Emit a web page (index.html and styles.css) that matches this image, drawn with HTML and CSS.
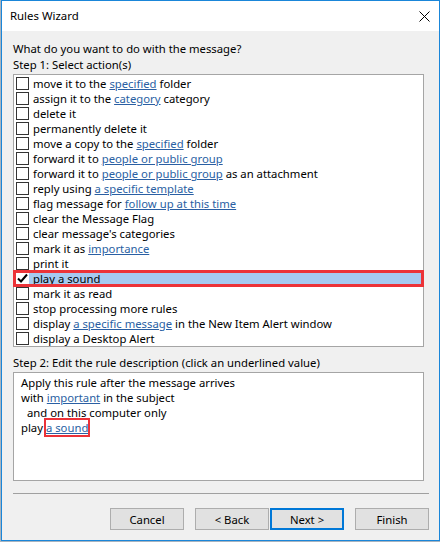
FILE: index.html
```html
<!DOCTYPE html>
<html lang="en">
<head>
<meta charset="utf-8">
<title>Rules Wizard</title>
<link rel="stylesheet" href="styles.css">
</head>
<body>
<div class="window">
  <div class="titlebar">
    <span class="title">Rules Wizard</span>
    <span class="close" aria-label="Close">
      <svg width="11" height="11" viewBox="0 0 11 11"><path d="M0.5 0.5 L10.5 10.5 M10.5 0.5 L0.5 10.5" stroke="#000" stroke-width="1" fill="none"/></svg>
    </span>
  </div>
  <div class="content">
    <p class="label">What do you want to do with the message?</p>
    <p class="label">Step 1: Select action(s)</p>
    <ul class="actions">
      <li class="action"><span class="cb"></span><span>move it to the <a class="val">specified</a> folder</span></li>
      <li class="action"><span class="cb"></span><span>assign it to the <a class="val">category</a> category</span></li>
      <li class="action"><span class="cb"></span><span>delete it</span></li>
      <li class="action"><span class="cb"></span><span>permanently delete it</span></li>
      <li class="action"><span class="cb"></span><span>move a copy to the <a class="val">specified</a> folder</span></li>
      <li class="action"><span class="cb"></span><span>forward it to <a class="val">people or public group</a></span></li>
      <li class="action"><span class="cb"></span><span>forward it to <a class="val">people or public group</a> as an attachment</span></li>
      <li class="action"><span class="cb"></span><span>reply using <a class="val">a specific template</a></span></li>
      <li class="action"><span class="cb"></span><span>flag message for <a class="val">follow up at this time</a></span></li>
      <li class="action"><span class="cb"></span><span>clear the Message Flag</span></li>
      <li class="action"><span class="cb"></span><span>clear message's categories</span></li>
      <li class="action"><span class="cb"></span><span>mark it as <a class="val">importance</a></span></li>
      <li class="action"><span class="cb"></span><span>print it</span></li>
      <li class="action selected"><span class="cb checked"><svg width="11" height="11" viewBox="0 0 11 11"><path d="M1 5.5 L4 8.5 L10 1.5" stroke="#000" stroke-width="2" fill="none"/></svg></span><span>play a sound</span></li>
      <li class="action"><span class="cb"></span><span>mark it as read</span></li>
      <li class="action"><span class="cb"></span><span>stop processing more rules</span></li>
      <li class="action"><span class="cb"></span><span>display <a class="val">a specific message</a> in the New Item Alert window</span></li>
      <li class="action"><span class="cb"></span><span>display a Desktop Alert</span></li>
    </ul>
    <p class="label step2">Step 2: Edit the rule description (click an underlined value)</p>
    <div class="desc">
      <div class="line">Apply this rule after the message arrives</div>
      <div class="line">with <a class="val">important</a> in the subject</div>
      <div class="line indent">and on this computer only</div>
      <div class="line">play <a class="val focus">a sound</a></div>
    </div>
    <div class="sep"></div>
    <div class="buttons">
      <button class="btn">Cancel</button>
      <button class="btn back">&lt; Back</button>
      <button class="btn default">Next &gt;</button>
      <button class="btn finish">Finish</button>
    </div>
  </div>
</div>
</body>
</html>
```
FILE: styles.css
```css
html, body {
  margin: 0;
  padding: 0;
}

body {
  width: 440px;
  height: 542px;
  background: #a9b4bf;
  font-family: "Noto Sans", "Open Sans", sans-serif;
  font-size: 11.3px;
  color: #000;
}

.window {
  box-sizing: border-box;
  margin-left: 1px;
  width: 439px;
  height: 541px;
  border: 1px solid #1a86d9;
  background: #f0f0f0;
  display: flex;
  flex-direction: column;
}

.titlebar {
  height: 30px;
  background: #fff;
  display: flex;
  align-items: center;
  justify-content: space-between;
  padding: 0 9px 0 8px;
  flex: none;
}

.title {
  font-size: 11.4px;
  line-height: 16px;
}

.close {
  display: flex;
  width: 11px;
  height: 11px;
}

.content {
  flex: 1;
  padding: 10px 10px 0 11px;
  display: flex;
  flex-direction: column;
}

.label {
  margin: 0;
  line-height: 16px;
  white-space: nowrap;
}

.actions {
  list-style: none;
  margin: 1px 5px 0 0;
  padding: 1px 0 0;
  background: #fff;
  border: 1px solid #a5a5a5;
}

.action {
  position: relative;
  height: 15px;
  display: flex;
  align-items: center;
  padding-left: 2px;
  white-space: nowrap;
}

.cb {
  box-sizing: border-box;
  width: 13px;
  height: 13px;
  border: 1px solid #333;
  background: #fff;
  margin-right: 4px;
  flex: none;
  display: flex;
  align-items: center;
  justify-content: center;
}

.action.selected {
  background: #a6caf0;
  outline: 3px solid #ec3338;
  outline-offset: -2px;
  z-index: 1;
}

.cb.checked {
  border-color: #fff;
}

.val {
  color: #2a5fa3;
  text-decoration: underline;
  cursor: pointer;
}

.step2 {
  margin-top: 8px;
}

.desc {
  box-sizing: border-box;
  margin: 1px 5px 0 0;
  height: 109px;
  padding: 2px 7px;
  background: #fff;
  border: 1px solid #a5a5a5;
}

.line {
  line-height: 15px;
  white-space: nowrap;
}

.indent {
  padding-left: 6px;
}

.focus {
  outline: 2px solid #ec3338;
  outline-offset: 0;
}

.sep {
  margin-top: 12px;
  height: 1px;
  background: #a0a0a0;
  flex: none;
}

.buttons {
  margin-top: 14px;
  display: flex;
  justify-content: flex-end;
}

.btn {
  box-sizing: border-box;
  width: 74px;
  height: 22px;
  margin: 0;
  padding: 0;
  border: 1px solid #adadad;
  background: #e1e1e1;
  font-family: inherit;
  font-size: 11.3px;
  color: #000;
}

.back {
  margin-left: 11px;
}

.default {
  margin-left: 1px;
  border: 2px solid #0078d7;
}

.finish {
  margin-left: 11px;
}
```
